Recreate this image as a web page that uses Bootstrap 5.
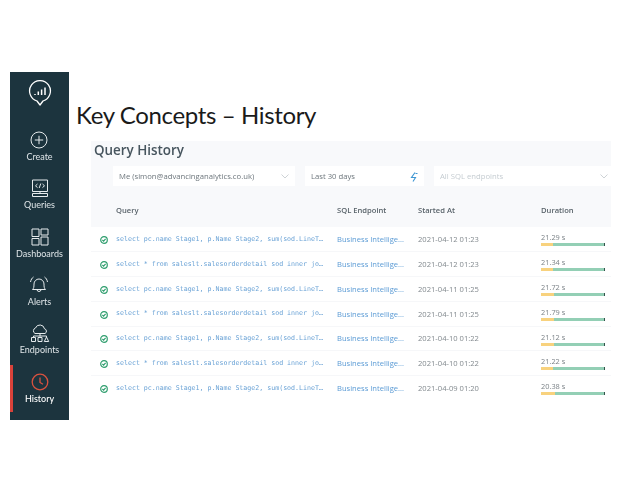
<!DOCTYPE html>
<html lang="en">
<head>
<meta charset="utf-8">
<title>Key Concepts – History</title>
<link rel="stylesheet" href="https://cdn.jsdelivr.net/npm/bootstrap@5.3.0/dist/css/bootstrap.min.css">
<style>
html,body{height:100%;background:#fff;overflow:hidden}
.slide{padding:72px 0 0 10px;font-family:"Open Sans",sans-serif}
.rail{width:59px;height:348px;background:#1c343e;flex:none;position:relative;font-family:Lato,sans-serif;color:#dfe5e8;filter:blur(.3px)}
.rail-logo{height:58px;padding-top:8px}
.rail-logo svg{display:block}
.rail-item{height:48.5px;font-size:9px;line-height:10px}
.rail-glyph{height:20px;margin-bottom:2px}
.rail-on{color:#fff;font-weight:500}
.rail-mark{position:absolute;left:0;top:293px;width:3px;height:47px;background:#d9423a}
.stage{width:535px;margin-left:8px}
.deck-title{font-family:Lato,sans-serif;font-size:24px;letter-spacing:-.36px;line-height:32px;color:#1a1a1a;margin:27px 0 10px -1px;font-weight:400;white-space:nowrap}
.qpanel{margin-left:14px;width:520px;height:259px;background:#f8f9fb;overflow:hidden;filter:blur(.35px)}
.qhead{font-size:13.4px;font-weight:600;color:#47555e;line-height:18px;margin:0;padding:0 0 0 3px}
.qfilters{padding:7px 0 9px 22px;gap:10px}
.qbox{height:20px;background:#fff;font-size:7.7px;color:#6d767c;padding:1px 6px 0;white-space:nowrap;flex:none}
.qb1{width:182px}.qb2{width:119px}.qb3{width:180px;color:#c5ccd1}
.qtable{table-layout:fixed;width:520px;margin:0;--bs-table-bg:transparent;--bs-table-border-color:#eef0f3}
.qtable th{height:32px;font-size:7.6px;font-weight:600;color:#59636a;padding:0;vertical-align:middle;border:0}
.qtable td{height:24.8px;padding:1px 0 0;vertical-align:middle;background:#fff;font-size:7.6px;color:#838a8f;border-bottom:1px solid #f6f7f9;white-space:nowrap}
.qtable tr:last-child td{border-bottom:0}
.qtable td.qsql{font-family:"DejaVu Sans Mono",monospace;font-size:6.62px;color:#6ba3d6}
.qtable td.qlink{color:#5b9bd5}
.qdur{font-size:7.4px;line-height:9px;color:#7b8287;padding-bottom:1px}
.qbar{width:64px;height:3px;background:#93cfb5;position:relative}
.qbar span{display:block;height:3px;background:#f8d27e}
.qbar i{position:absolute;right:0;top:0;width:1px;height:3px;background:#33524a}
</style>
</head>
<body>
<div class="slide d-flex">
  <nav class="rail d-flex flex-column align-items-center">
    <div class="rail-logo">
      <svg width="24" height="26" viewBox="0 0 24 26" fill="none" stroke="#fff" stroke-width="1.300"><path d="M15 21 12 25 9 21A10.400 10.400 0 1 1 15 21z" stroke-linejoin="round"/><path d="M7 14v1M10.300 11.500v3.500M13.600 9.500v5.500M17 7.500v7.500" stroke-width="1.500"/></svg>
    </div>
    <div class="rail-item d-flex flex-column align-items-center">
      <div class="rail-glyph d-flex align-items-center"><svg width="18" height="18" viewBox="0 0 18 18" fill="none" stroke="#e6ebed" stroke-width="1"><circle cx="9" cy="9" r="8"/><path d="M9 4.800v8.400M4.800 9h8.400"/></svg></div>Create</div>
    <div class="rail-item d-flex flex-column align-items-center">
      <div class="rail-glyph d-flex align-items-center"><svg width="18" height="19" viewBox="0 0 18 19" fill="none" stroke="#e6ebed" stroke-width="1"><path d="M1.500 1h15v11.500h-15zM9 12.500v2M1.500 14.500h15v3h-15z"/><path d="M6.500 5 4.500 6.800l2 1.800M11.500 5l2 1.800-2 1.800M9.800 4.500 8.200 9"/></svg></div>Queries</div>
    <div class="rail-item d-flex flex-column align-items-center">
      <div class="rail-glyph d-flex align-items-center"><svg width="18" height="18" viewBox="0 0 18 18" fill="none" stroke="#e6ebed" stroke-width="1"><path d="M1 1h7v7.500H1zM10 1h7v6h-7zM1 10.500h7V17H1zM10 9h7v8h-7z"/></svg></div>Dashboards</div>
    <div class="rail-item d-flex flex-column align-items-center">
      <div class="rail-glyph d-flex align-items-center"><svg width="20" height="19" viewBox="0 0 20 19" fill="none" stroke="#e6ebed" stroke-width="1"><path d="M3.500 14.500c1.300-1.300 1.500-2.500 1.500-5.500a5 5 0 0 1 10 0c0 3 .2 4.200 1.500 5.500zM8 14.500a2 2 0 0 0 4 0M1.500 7C2 4.500 3 3 4.500 2M18.500 7c-.5-2.500-1.500-4-3-5"/></svg></div>Alerts</div>
    <div class="rail-item d-flex flex-column align-items-center">
      <div class="rail-glyph d-flex align-items-center"><svg width="20" height="19" viewBox="0 0 20 19" fill="none" stroke="#e6ebed" stroke-width="1"><path d="M5 9.500a3 3 0 0 1 .5-5.500 4.700 4.700 0 0 1 9 .8 2.500 2.500 0 0 1 .5 4.700zM10 9.500v3M3.500 13v-1h13v1M1.500 13.500h4v4h-4zM8 13.500h4v4H8zM16.500 13l2.200 4.500h-4.400z"/></svg></div>Endpoints</div>
    <div class="rail-item rail-on d-flex flex-column align-items-center">
      <div class="rail-glyph d-flex align-items-center"><svg width="18" height="18" viewBox="0 0 18 18" fill="none" stroke="#d9523f" stroke-width="1.300"><circle cx="9" cy="9" r="7.800"/><path d="M9 4.500V9.500l3 1.800"/></svg></div>History</div>
    <span class="rail-mark"></span>
  </nav>
  <main class="stage">
    <h1 class="deck-title">Key Concepts – History</h1>
    <section class="qpanel">
      <h2 class="qhead">Query History</h2>
      <div class="qfilters d-flex">
        <div class="qbox qb1 d-flex align-items-center justify-content-between">Me (simon@advancinganalytics.co.uk)
          <svg width="8" height="5" viewBox="0 0 8 5" fill="none" stroke="#c2c8cc" stroke-width=".8"><path d="M.5.500 4 4 7.500.500"/></svg></div>
        <div class="qbox qb2 d-flex align-items-center justify-content-between">Last 30 days
          <svg width="8" height="10" viewBox="0 0 8 10" fill="none" stroke="#3f97d3" stroke-width="1.100"><path d="M5 .5 1.500 5.500h4L3 9.500M5.500 1.500h2"/></svg></div>
        <div class="qbox qb3 d-flex align-items-center justify-content-between">All SQL endpoints
          <svg width="8" height="5" viewBox="0 0 8 5" fill="none" stroke="#c2c8cc" stroke-width=".8"><path d="M.5.500 4 4 7.500.500"/></svg></div>
      </div>
      <table class="table qtable">
        <colgroup><col style="width:25px"><col style="width:221px"><col style="width:81px"><col style="width:123px"><col style="width:70px"></colgroup>
        <thead><tr><th></th><th>Query</th><th>SQL Endpoint</th><th>Started At</th><th>Duration</th></tr></thead>
        <tbody id="qrows"></tbody>
      </table>
    </section>
  </main>
</div>
<script>
var a="select pc.name Stage1, p.Name Stage2, sum(sod.LineT…",b="select * from saleslt.salesorderdetail sod inner jo…";
var d=[[a,"2021-04-12 01:23","21.29 s",19],[b,"2021-04-12 01:23","21.34 s",19],[a,"2021-04-11 01:25","21.72 s",20],[b,"2021-04-11 01:25","21.79 s",20],[a,"2021-04-10 01:22","21.12 s",21],[b,"2021-04-10 01:22","21.22 s",18],[a,"2021-04-09 01:20","20.38 s",22]];
document.getElementById("qrows").innerHTML=d.map(function(r){return '<tr><td class="text-end pe-2"><svg width="8" height="8" viewBox="0 0 8 8" fill="none" stroke="#2f9e6e" stroke-width="1.200"><circle cx="4" cy="4" r="3.300"/><path d="M2.400 4 3.600 5.100 5.600 2.900"/></svg></td><td class="qsql">'+r[0]+'</td><td class="qlink">Business Intellige...</td><td>'+r[1]+'</td><td><div class="qdur">'+r[2]+'</div><div class="qbar"><span style="width:'+r[3]+'%"></span><i></i></div></td></tr>';}).join("");
</script>
<script src="https://cdn.jsdelivr.net/npm/bootstrap@5.3.0/dist/js/bootstrap.bundle.min.js"></script>
</body>
</html>
